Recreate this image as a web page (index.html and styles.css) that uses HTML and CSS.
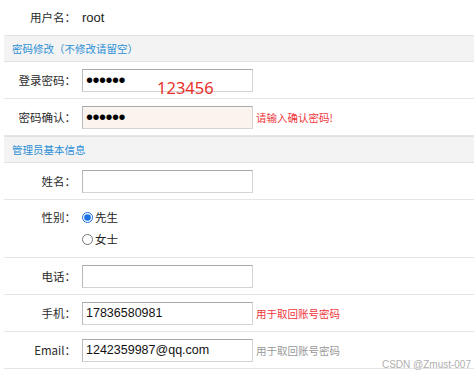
FILE: index.html
```html
<!DOCTYPE html>
<html lang="zh-CN">
<head>
    <meta charset="UTF-8">
    <title>管理员信息</title>
    <link rel="stylesheet" href="styles.css">
</head>
<body>
    <div class="form">
        <div class="row first">
            <div class="label">用户名：</div>
            <div class="field"><span class="value">root</span></div>
        </div>

        <div class="section">密码修改（不修改请留空）</div>
        <div class="row">
            <div class="label">登录密码：</div>
            <div class="field"><input class="text pwd" type="password" value="123456"></div>
        </div>
        <div class="row">
            <div class="label">密码确认：</div>
            <div class="field">
                <input class="text pwd invalid" type="password" value="123456">
                <span class="hint error">请输入确认密码!</span>
            </div>
        </div>

        <div class="section">管理员基本信息</div>
        <div class="row">
            <div class="label">姓名：</div>
            <div class="field"><input class="text" type="text"></div>
        </div>
        <div class="row gender">
            <div class="label">性别：</div>
            <div class="field radios">
                <label class="radio"><input type="radio" name="sex" checked>先生</label>
                <label class="radio"><input type="radio" name="sex">女士</label>
            </div>
        </div>
        <div class="row">
            <div class="label">电话：</div>
            <div class="field"><input class="text" type="text"></div>
        </div>
        <div class="row">
            <div class="label">手机：</div>
            <div class="field">
                <input class="text" type="text" value="17836580981">
                <span class="hint error">用于取回账号密码</span>
            </div>
        </div>
        <div class="row">
            <div class="label">Email：</div>
            <div class="field">
                <input class="text" type="text" value="1242359987@qq.com">
                <span class="hint">用于取回账号密码</span>
            </div>
        </div>
    </div>

    <div class="note">123456</div>
    <div class="watermark">CSDN @Zmust-007</div>
</body>
</html>
```

FILE: styles.css
```css
body {
    margin: 0;
    padding: 0;
    background: #fff;
    font-family: "Noto Sans CJK SC", "Noto Sans", sans-serif;
    font-size: 11px;
    color: #333;
    position: relative;
    width: 474px;
    height: 374px;
    overflow: hidden;
}
.form {
    margin-left: 4px;
}
.row {
    display: flex;
    align-items: center;
    height: 37px;
    border-bottom: 1px solid #e6e6e6;
    box-sizing: border-box;
}
.row.first {
    height: 35px;
    border-bottom: none;
}
.row.gender {
    height: 58px;
    align-items: flex-start;
    padding-top: 9px;
}
.label {
    width: 72px;
    text-align: right;
    flex-shrink: 0;
    font-size: 11.5px;
    line-height: 17px;
    color: #2b2b2b;
}
.field {
    display: flex;
    align-items: center;
    margin-left: 6px;
}
.value {
    font-family: "Liberation Sans", sans-serif;
    font-size: 13px;
    color: #222;
}
.section {
    height: 27px;
    line-height: 26px;
    padding-left: 8px;
    background: #f3f3f3;
    border-top: 1px solid #e2e2e2;
    border-bottom: 1px solid #e2e2e2;
    box-sizing: border-box;
    color: #2a8fd6;
    font-size: 10.5px;
}
.text {
    width: 171px;
    height: 23px;
    box-sizing: border-box;
    border: 1px solid #d4d4d4;
    border-top-color: #a9a9a9;
    border-left-color: #b9b9b9;
    padding: 0 3px;
    font-family: "Liberation Sans", sans-serif;
    font-size: 12.5px;
    color: #111;
    background: #fff;
    outline: none;
}
.text.pwd {
    font-size: 20px;
    letter-spacing: -0.5px;
    color: #000;
}
.text.invalid {
    background: #fbf3ee;
}
.hint {
    margin-left: 3px;
    font-size: 10.5px;
    color: #999;
}
.hint.error {
    color: #f0353a;
}
.radios {
    flex-direction: column;
    align-items: flex-start;
    gap: 5px;
}
.radio {
    display: flex;
    align-items: center;
    font-size: 11.5px;
    line-height: 17px;
    color: #222;
}
.radio input {
    width: 11px;
    height: 11px;
    margin: 0 2px 0 0;
    accent-color: #1a73e8;
}
.note {
    position: absolute;
    left: 157px;
    top: 76px;
    font-family: "Noto Sans", sans-serif;
    font-size: 16.5px;
    color: #e8312f;
}
.watermark {
    position: absolute;
    right: 3px;
    bottom: 4px;
    font-family: "Liberation Sans", sans-serif;
    font-size: 10px;
    color: #b0b0b0;
}
```
